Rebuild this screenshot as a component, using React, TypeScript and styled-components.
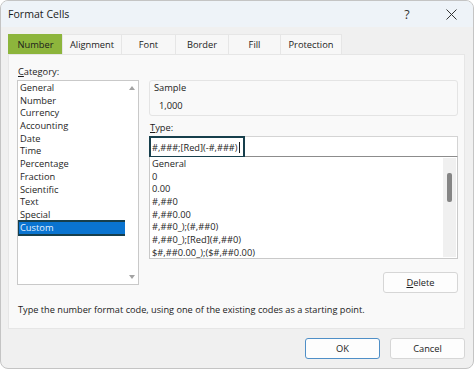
import React from 'react';
import styled, { createGlobalStyle } from 'styled-components';

const GlobalStyle = createGlobalStyle`
  html, body { margin: 0; padding: 0; background: #ffffff; }
  body { font-family: "Open Sans", "Noto Sans", sans-serif; color: #1b1b1b; }
  * { box-sizing: border-box; }
`;

const FS = '9.3px';

const categories = [
  'General', 'Number', 'Currency', 'Accounting', 'Date', 'Time',
  'Percentage', 'Fraction', 'Scientific', 'Text', 'Special', 'Custom',
];

const formats = [
  'General', '0', '0.00', '#,##0', '#,##0.00',
  '#,##0_);(#,##0)', '#,##0_);[Red](#,##0)', '$#,##0.00_);($#,##0.00)',
];

const tabs = [
  { label: 'Number', width: 55 },
  { label: 'Alignment', width: 60 },
  { label: 'Font', width: 55 },
  { label: 'Border', width: 54 },
  { label: 'Fill', width: 53 },
  { label: 'Protection', width: 62 },
];

/* ------------------------------ window frame ----------------------------- */

const Window = styled.div`
  width: 474px;
  height: 369px;
  display: flex;
  flex-direction: column;
  background: #f0f0f0;
  border: 1px solid #c4c4c4;
  border-radius: 8px;
  overflow: hidden;
`;

const TitleBar = styled.div`
  height: 26px;
  display: flex;
  align-items: center;
  padding-left: 7px;
  background: #eef3f8;
`;

const Title = styled.span`
  flex: 1;
  font-size: 10.6px;
  color: #1b1b1b;
`;

const TitleButton = styled.span`
  width: 44px;
  height: 26px;
  display: flex;
  align-items: center;
  justify-content: center;
  font-size: 12.5px;
  color: #333;
`;

/* --------------------------------- tabs ---------------------------------- */

const TabStrip = styled.div`
  display: flex;
  margin: 7px 0 0 7px;
  height: 20px;
`;

const Tab = styled.div<{ $active?: boolean }>`
  height: 20px;
  display: flex;
  align-items: center;
  justify-content: center;
  font-size: ${FS};
  background: ${(p) => (p.$active ? '#8db53c' : '#f7f7f7')};
  border: 1px solid ${(p) => (p.$active ? '#8db53c' : '#e6e6e6')};
  border-bottom: none;
  margin-right: -1px;
`;

/* --------------------------------- panel --------------------------------- */

const Panel = styled.div`
  margin: 0 8px 0 7px;
  height: 275px;
  background: #f9f9f9;
  border: 1px solid #e6e6e6;
  padding: 9px 7px 0 8px;
  display: grid;
  grid-template-columns: 122px 309px;
  grid-template-rows: auto auto;
  column-gap: 10px;
  align-content: start;
`;

const Column = styled.div<{ $offset?: number }>`
  display: flex;
  flex-direction: column;
  padding-top: ${(p) => p.$offset ?? 0}px;
`;

const Label = styled.div`
  height: 16px;
  line-height: 15px;
  font-size: ${FS};
  padding-left: 1px;
`;

const U = styled.span`
  text-decoration: underline;
  text-underline-offset: 1px;
`;

const ListBox = styled.div<{ $height: number; $joined?: boolean }>`
  height: ${(p) => p.$height}px;
  display: flex;
  background: #ffffff;
  border: 1px solid #c9c9c9;
  ${(p) => (p.$joined ? 'border-top: none;' : '')}
`;

const Items = styled.div<{ $pad?: number }>`
  flex: 1;
  padding-top: ${(p) => p.$pad ?? 0}px;
  overflow: hidden;
`;

const Item = styled.div<{ $selected?: boolean }>`
  height: 12.7px;
  line-height: 12.7px;
  font-size: ${FS};
  padding-left: ${(p) => (p.$selected ? '1px' : '2px')};
  white-space: nowrap;
  color: ${(p) => (p.$selected ? '#e4f2ff' : '#262626')};
  background: ${(p) => (p.$selected ? '#0a74d0' : 'transparent')};
  box-shadow: ${(p) => (p.$selected ? '0 0 0 2px #173f4c' : 'none')};
  margin-left: ${(p) => (p.$selected ? '1px' : '0')};
  position: relative;
`;

const ArrowColumn = styled.div`
  width: 13px;
  display: flex;
  flex-direction: column;
  justify-content: space-between;
  align-items: center;
  padding: 5px 0 5px;
`;

const Arrow = styled.span<{ $down?: boolean }>`
  width: 0;
  height: 0;
  border-left: 3.5px solid transparent;
  border-right: 3.5px solid transparent;
  ${(p) => (p.$down ? 'border-top: 4px solid #a3a3a3;' : 'border-bottom: 4px solid #a3a3a3;')}
`;

const ScrollTrack = styled.div`
  width: 13px;
  margin: 1px 1px 1px 0;
  background: #f0f0f0;
  display: flex;
  justify-content: center;
`;

const Thumb = styled.div`
  width: 5px;
  height: 29px;
  margin-top: 15px;
  border-radius: 2px;
  background: #858585;
`;

const SampleBox = styled.div`
  height: 36px;
  border: 1px solid #e4e4e4;
  border-radius: 3px;
  padding: 0 0 0 4px;
  display: flex;
  flex-direction: column;
`;

const SampleLabel = styled.div`
  font-size: ${FS};
  line-height: 13px;
`;

const SampleValue = styled.div`
  font-size: ${FS};
  line-height: 13px;
  padding-left: 5px;
  margin-top: 5px;
`;

const TypeLabel = styled(Label)`
  margin-top: 4px;
`;

const TypeInput = styled.div`
  height: 21px;
  background: #ffffff;
  border: 1px solid #d4d4d4;
  border-bottom-color: #8c8c8c;
  display: flex;
  align-items: stretch;
`;

const Highlight = styled.span`
  width: 96px;
  margin: -1px 0 -2px -1px;
  border: 2px solid #173f4c;
  display: flex;
  align-items: center;
  padding-left: 1px;
  font-size: 9.2px;
  white-space: nowrap;
`;

const Caret = styled.span`
  width: 1px;
  height: 11px;
  margin-left: 1px;
  background: #1b1b1b;
`;

const FooterRow = styled.div`
  display: flex;
  justify-content: flex-end;
  margin-top: 13px;
`;

const Button = styled.div<{ $default?: boolean }>`
  width: 75px;
  height: 21px;
  display: flex;
  align-items: center;
  justify-content: center;
  font-size: ${FS};
  background: #fdfdfd;
  border: 1px solid ${(p) => (p.$default ? '#4f8fc7' : '#d6d6d6')};
  border-radius: 3px;
`;

const Description = styled.div`
  grid-column: 1 / span 2;
  margin-top: 9px;
  height: 16px;
  line-height: 16px;
  font-size: 9.2px;
  padding-left: 1px;
`;

const Footer = styled.div`
  display: flex;
  justify-content: flex-end;
  gap: 10px;
  padding: 9px 8px 0 0;
`;

function CloseIcon() {
  return (
    <svg width="11" height="11" viewBox="0 0 11 11">
      <path d="M0.5 0.5 L10.5 10.5 M10.5 0.5 L0.5 10.5" stroke="#333" strokeWidth="1" fill="none" />
    </svg>
  );
}

export default function App() {
  return (
    <>
      <GlobalStyle />
      <Window>
        <TitleBar>
          <Title>Format Cells</Title>
          <TitleButton>?</TitleButton>
          <TitleButton><CloseIcon /></TitleButton>
        </TitleBar>
        <TabStrip>
          {tabs.map((t, i) => (
            <Tab key={t.label} $active={i === 0} style={{ width: t.width }}>
              {t.label}
            </Tab>
          ))}
        </TabStrip>
        <Panel>
          <Column>
            <Label><U>C</U>ategory:</Label>
            <ListBox $height={205}>
              <Items $pad={1}>
                {categories.map((c) => (
                  <Item key={c} $selected={c === 'Custom'}>{c}</Item>
                ))}
              </Items>
              <ArrowColumn>
                <Arrow />
                <Arrow $down />
              </ArrowColumn>
            </ListBox>
          </Column>
          <Column $offset={16}>
            <SampleBox>
              <SampleLabel>Sample</SampleLabel>
              <SampleValue>1,000</SampleValue>
            </SampleBox>
            <TypeLabel><U>T</U>ype:</TypeLabel>
            <TypeInput>
              <Highlight>
                #,###;[Red](-#,###)
                <Caret />
              </Highlight>
            </TypeInput>
            <ListBox $height={102} $joined>
              <Items $pad={1}>
                {formats.map((f) => (
                  <Item key={f}>{f}</Item>
                ))}
              </Items>
              <ScrollTrack>
                <Thumb />
              </ScrollTrack>
            </ListBox>
            <FooterRow>
              <Button><U>D</U>elete</Button>
            </FooterRow>
          </Column>
          <Description>
            Type the number format code, using one of the existing codes as a starting point.
          </Description>
        </Panel>
        <Footer>
          <Button $default>OK</Button>
          <Button>Cancel</Button>
        </Footer>
      </Window>
    </>
  );
}
